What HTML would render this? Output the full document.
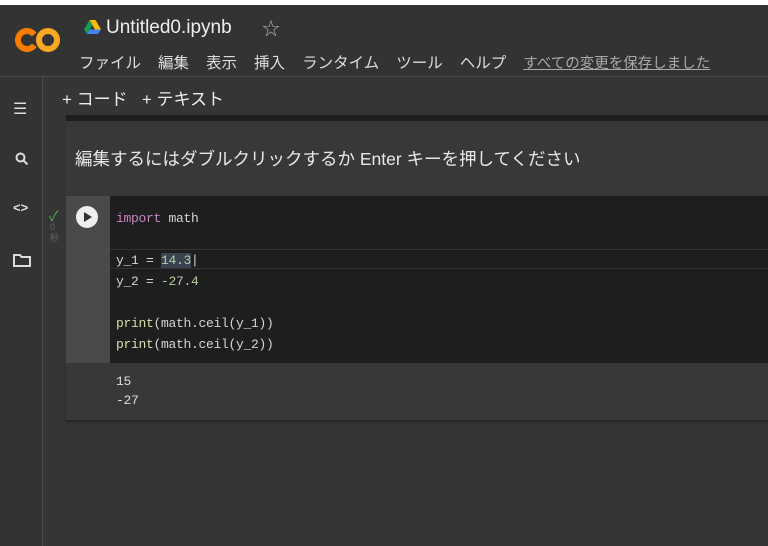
<!DOCTYPE html>
<html><head><meta charset="utf-8"><style>
body{margin:0;width:768px;height:546px;background:#353535;overflow:hidden;position:relative;font-family:"Liberation Sans","Noto Sans CJK JP",sans-serif;color:#e3e3e3}
div{position:absolute;box-sizing:border-box}
.mono{font-family:"Liberation Mono","Noto Sans CJK JP",monospace;font-size:13px;letter-spacing:-0.3px}
.m span{margin-right:17px}
</style></head><body>
<div style="left:0;top:0;width:768px;height:5px;background:#fff"></div>
<div style="left:0;top:5px;width:768px;height:72px;background:#333;border-bottom:1px solid #4a4a4a"></div>
<svg style="position:absolute;left:15px;top:27px" width="46" height="26"><circle cx="12" cy="13" r="9" stroke="#f57c00" stroke-width="6" fill="none" stroke-dasharray="45 12" transform="rotate(35 12 13)"/><circle cx="33" cy="13" r="9" stroke="#f9a825" stroke-width="6" fill="none"/></svg>
<svg style="position:absolute;left:84px;top:20px" width="17" height="14" viewBox="0 0 17 14"><path d="M5.5 0h6l5.5 9.5h-6z" fill="#fbbc04"/><path d="M5.5 0l3 5.2L3 14 0 9.5z" fill="#0f9d58"/><path d="M3 14l3-4.5h11L14 14z" fill="#4285f4"/></svg>
<div style="left:106px;top:17px;font-size:19px;color:#eee">Untitled0.ipynb</div>
<div style="left:262px;top:15px;font-size:18px;color:#aaa">☆</div>
<div class="m" style="left:79px;top:51px;font-size:15.5px;color:#ddd;white-space:nowrap"><span>ファイル</span><span>編集</span><span>表示</span><span>挿入</span><span>ランタイム</span><span>ツール</span><span>ヘルプ</span><u style="color:#aaa;font-size:14.5px">すべての変更を保存しました</u></div>
<div style="left:0;top:77px;width:43px;height:469px;background:#333;border-right:1px solid #4a4a4a"></div>
<div style="left:13px;top:99px;font-size:16px;color:#ddd">☰</div>
<svg style="position:absolute;left:15px;top:152px" width="14" height="14"><circle cx="5.5" cy="5.5" r="4" stroke="#ddd" stroke-width="2" fill="none"/><path d="M8.5 8.5l4 4" stroke="#ddd" stroke-width="2"/></svg>
<div style="left:13px;top:200px;font-size:13px;font-weight:bold;color:#ddd">&lt;&gt;</div>
<svg style="position:absolute;left:13px;top:253px" width="18" height="14"><path d="M1 2h6l1.5 2H17v9H1z" stroke="#ddd" stroke-width="2" fill="none"/></svg>
<div style="left:62px;top:85px;font-size:17px;color:#eee;white-space:nowrap">+ コード &nbsp; + テキスト</div>
<div style="left:66px;top:115px;width:702px;height:6px;background:#1e1e1e"></div>
<div style="left:66px;top:121px;width:702px;height:74px;background:#383838"></div>
<div style="left:75px;top:146px;font-size:17.5px;color:#e8e8e8">編集するにはダブルクリックするか Enter キーを押してください</div>
<div style="left:49px;top:206px;font-size:14px;color:#4caf50">✓</div>
<div style="left:50px;top:222px;font-size:9px;color:#666;line-height:11px">0<br>秒</div>
<div style="left:66px;top:196px;width:44px;height:167px;background:#4a4a4a"></div>
<div style="left:76px;top:206px;width:22px;height:22px;border-radius:50%;background:#eee"></div>
<svg style="position:absolute;left:84px;top:212px" width="8" height="10"><path d="M0 0L8 5 0 10z" fill="#333"/></svg>
<div style="left:110px;top:196px;width:658px;height:167px;background:#1e1e1e"></div>
<div style="left:110px;top:249px;width:658px;height:20px;border-top:1px solid #333;border-bottom:1px solid #333"></div>
<div class="mono" style="left:116px;top:208px;line-height:21px;color:#d4d4d4;white-space:pre"><span style="color:#c586c0">import</span> math

y_1 = <span style="background:#3a4450;color:#b5cea8">14.3</span>|
y_2 = <span style="color:#b5cea8">-27.4</span>

<span style="color:#dcdcaa">print</span>(math.ceil(y_1))
<span style="color:#dcdcaa">print</span>(math.ceil(y_2))</div>
<div style="left:66px;top:363px;width:702px;height:57px;background:#383838;box-shadow:0 2px 3px #222"></div>
<div class="mono" style="left:116px;top:372px;line-height:19px;color:#ddd">15<br>-27</div>
</body></html>
